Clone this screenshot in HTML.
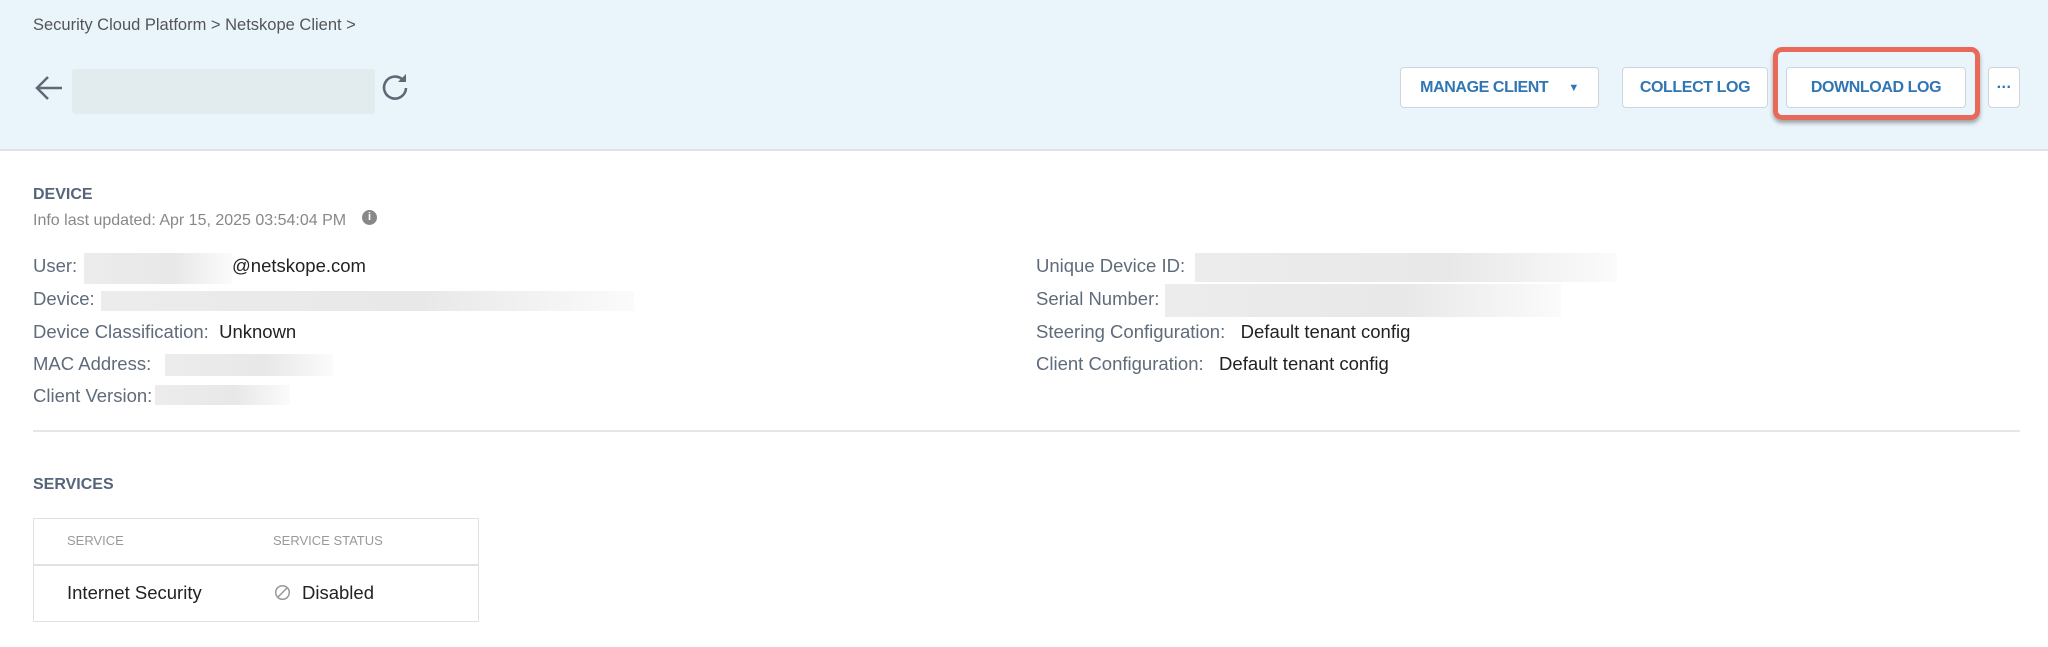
<!DOCTYPE html>
<html><head><meta charset="utf-8"><style>
*{margin:0;padding:0;box-sizing:border-box}
body{width:2048px;height:647px;background:#fff;font-family:"Liberation Sans",sans-serif;position:relative;overflow:hidden;color:#222}
.a{position:absolute;white-space:nowrap}
#hdr{position:absolute;left:0;top:0;width:2048px;height:151px;background:#eaf5fb;border-bottom:2px solid #dde3e8}
.btn{position:absolute;top:67px;height:41px;background:#fff;border:1.5px solid #cdd6dd;border-radius:4px;color:#2f76b3;font-size:16px;font-weight:bold;display:flex;align-items:center;justify-content:center;letter-spacing:-0.4px}
.lbl{color:#5e6b7a;font-size:18.5px}
.val{color:#222;font-size:18.5px}
.blur{position:absolute;background:linear-gradient(90deg,#ececec,#e8e8e8 60%,#fbfbfb)}
</style></head><body>
<div id="hdr"></div>
<div class="a" style="left:33px;top:16px;font-size:16.5px;color:#555">Security Cloud Platform &gt; Netskope Client &gt;</div>
<svg class="a" style="left:34px;top:74px" width="30" height="28" viewBox="0 0 30 28"><path d="M28 14H3M14 3L3 14l11 11" fill="none" stroke="#5d6975" stroke-width="2.5"/></svg>
<div class="a" style="left:72px;top:69px;width:303px;height:45px;background:#e2ecef;border-radius:3px"></div>
<svg class="a" style="left:380px;top:73px" width="30" height="30" viewBox="0 0 30 30"><path d="M23 7A11 11 0 1 0 26 15" fill="none" stroke="#5d6975" stroke-width="2.6"/><path d="M18 9l8 0 0-8z" fill="#5d6975"/></svg>
<div class="btn" style="left:1400px;width:199px">MANAGE CLIENT<span style="font-size:11px;margin-left:20px">▼</span></div>
<div class="btn" style="left:1622px;width:146px">COLLECT LOG</div>
<div class="btn" style="left:1786px;width:180px">DOWNLOAD LOG</div>
<div class="btn" style="left:1988px;width:32px">···</div>
<div class="a" style="left:1773px;top:47px;width:207px;height:73px;border:5px solid #e8685a;border-radius:9px;box-shadow:0 3px 4px rgba(0,0,0,.35)"></div>

<div class="a" style="left:33px;top:186px;font-size:16px;font-weight:bold;color:#56657a">DEVICE</div>
<div class="a" style="left:33px;top:212px;font-size:16px;color:#888">Info last updated: Apr 15, 2025 03:54:04 PM</div>
<div class="a" style="left:362px;top:210px;width:15px;height:15px;border-radius:50%;background:#888;color:#fff;font-size:11px;font-weight:bold;text-align:center;line-height:15px">i</div>

<div class="a lbl" style="left:33px;top:255px">User:</div>
<div class="blur" style="left:84px;top:253px;width:148px;height:31px"></div>
<div class="a val" style="left:232px;top:255px">@netskope.com</div>
<div class="a lbl" style="left:33px;top:288px">Device:</div>
<div class="blur" style="left:101px;top:291px;width:533px;height:20px"></div>
<div class="a lbl" style="left:33px;top:321px">Device Classification:&nbsp; <span class="val">Unknown</span></div>
<div class="a lbl" style="left:33px;top:353px">MAC Address:</div>
<div class="blur" style="left:165px;top:354px;width:168px;height:22px"></div>
<div class="a lbl" style="left:33px;top:385px">Client Version:</div>
<div class="blur" style="left:155px;top:385px;width:135px;height:20px"></div>

<div class="a lbl" style="left:1036px;top:255px">Unique Device ID:</div>
<div class="blur" style="left:1195px;top:253px;width:422px;height:29px"></div>
<div class="a lbl" style="left:1036px;top:288px">Serial Number:</div>
<div class="blur" style="left:1165px;top:284px;width:396px;height:33px"></div>
<div class="a lbl" style="left:1036px;top:321px">Steering Configuration:&nbsp;&nbsp;&nbsp;<span class="val">Default tenant config</span></div>
<div class="a lbl" style="left:1036px;top:353px">Client Configuration:&nbsp;&nbsp;&nbsp;<span class="val">Default tenant config</span></div>

<div class="a" style="left:33px;top:430px;width:1987px;height:2px;background:#e6e6e6"></div>
<div class="a" style="left:33px;top:476px;font-size:16px;font-weight:bold;color:#56657a">SERVICES</div>
<div class="a" style="left:33px;top:518px;width:446px;height:104px;border:1.5px solid #e2e2e2"></div>
<div class="a" style="left:33px;top:564px;width:446px;height:1.5px;background:#e2e2e2"></div>
<div class="a" style="left:67px;top:533px;font-size:13px;color:#999">SERVICE</div>
<div class="a" style="left:273px;top:533px;font-size:13px;color:#999">SERVICE STATUS</div>
<div class="a val" style="left:67px;top:582px">Internet Security</div>
<svg class="a" style="left:274px;top:584px" width="17" height="17" viewBox="0 0 17 17"><circle cx="8.5" cy="8.5" r="6.8" fill="none" stroke="#999" stroke-width="1.5"/><path d="M4 13L13 4" stroke="#999" stroke-width="1.5"/></svg>
<div class="a val" style="left:302px;top:582px">Disabled</div>
</body></html>
